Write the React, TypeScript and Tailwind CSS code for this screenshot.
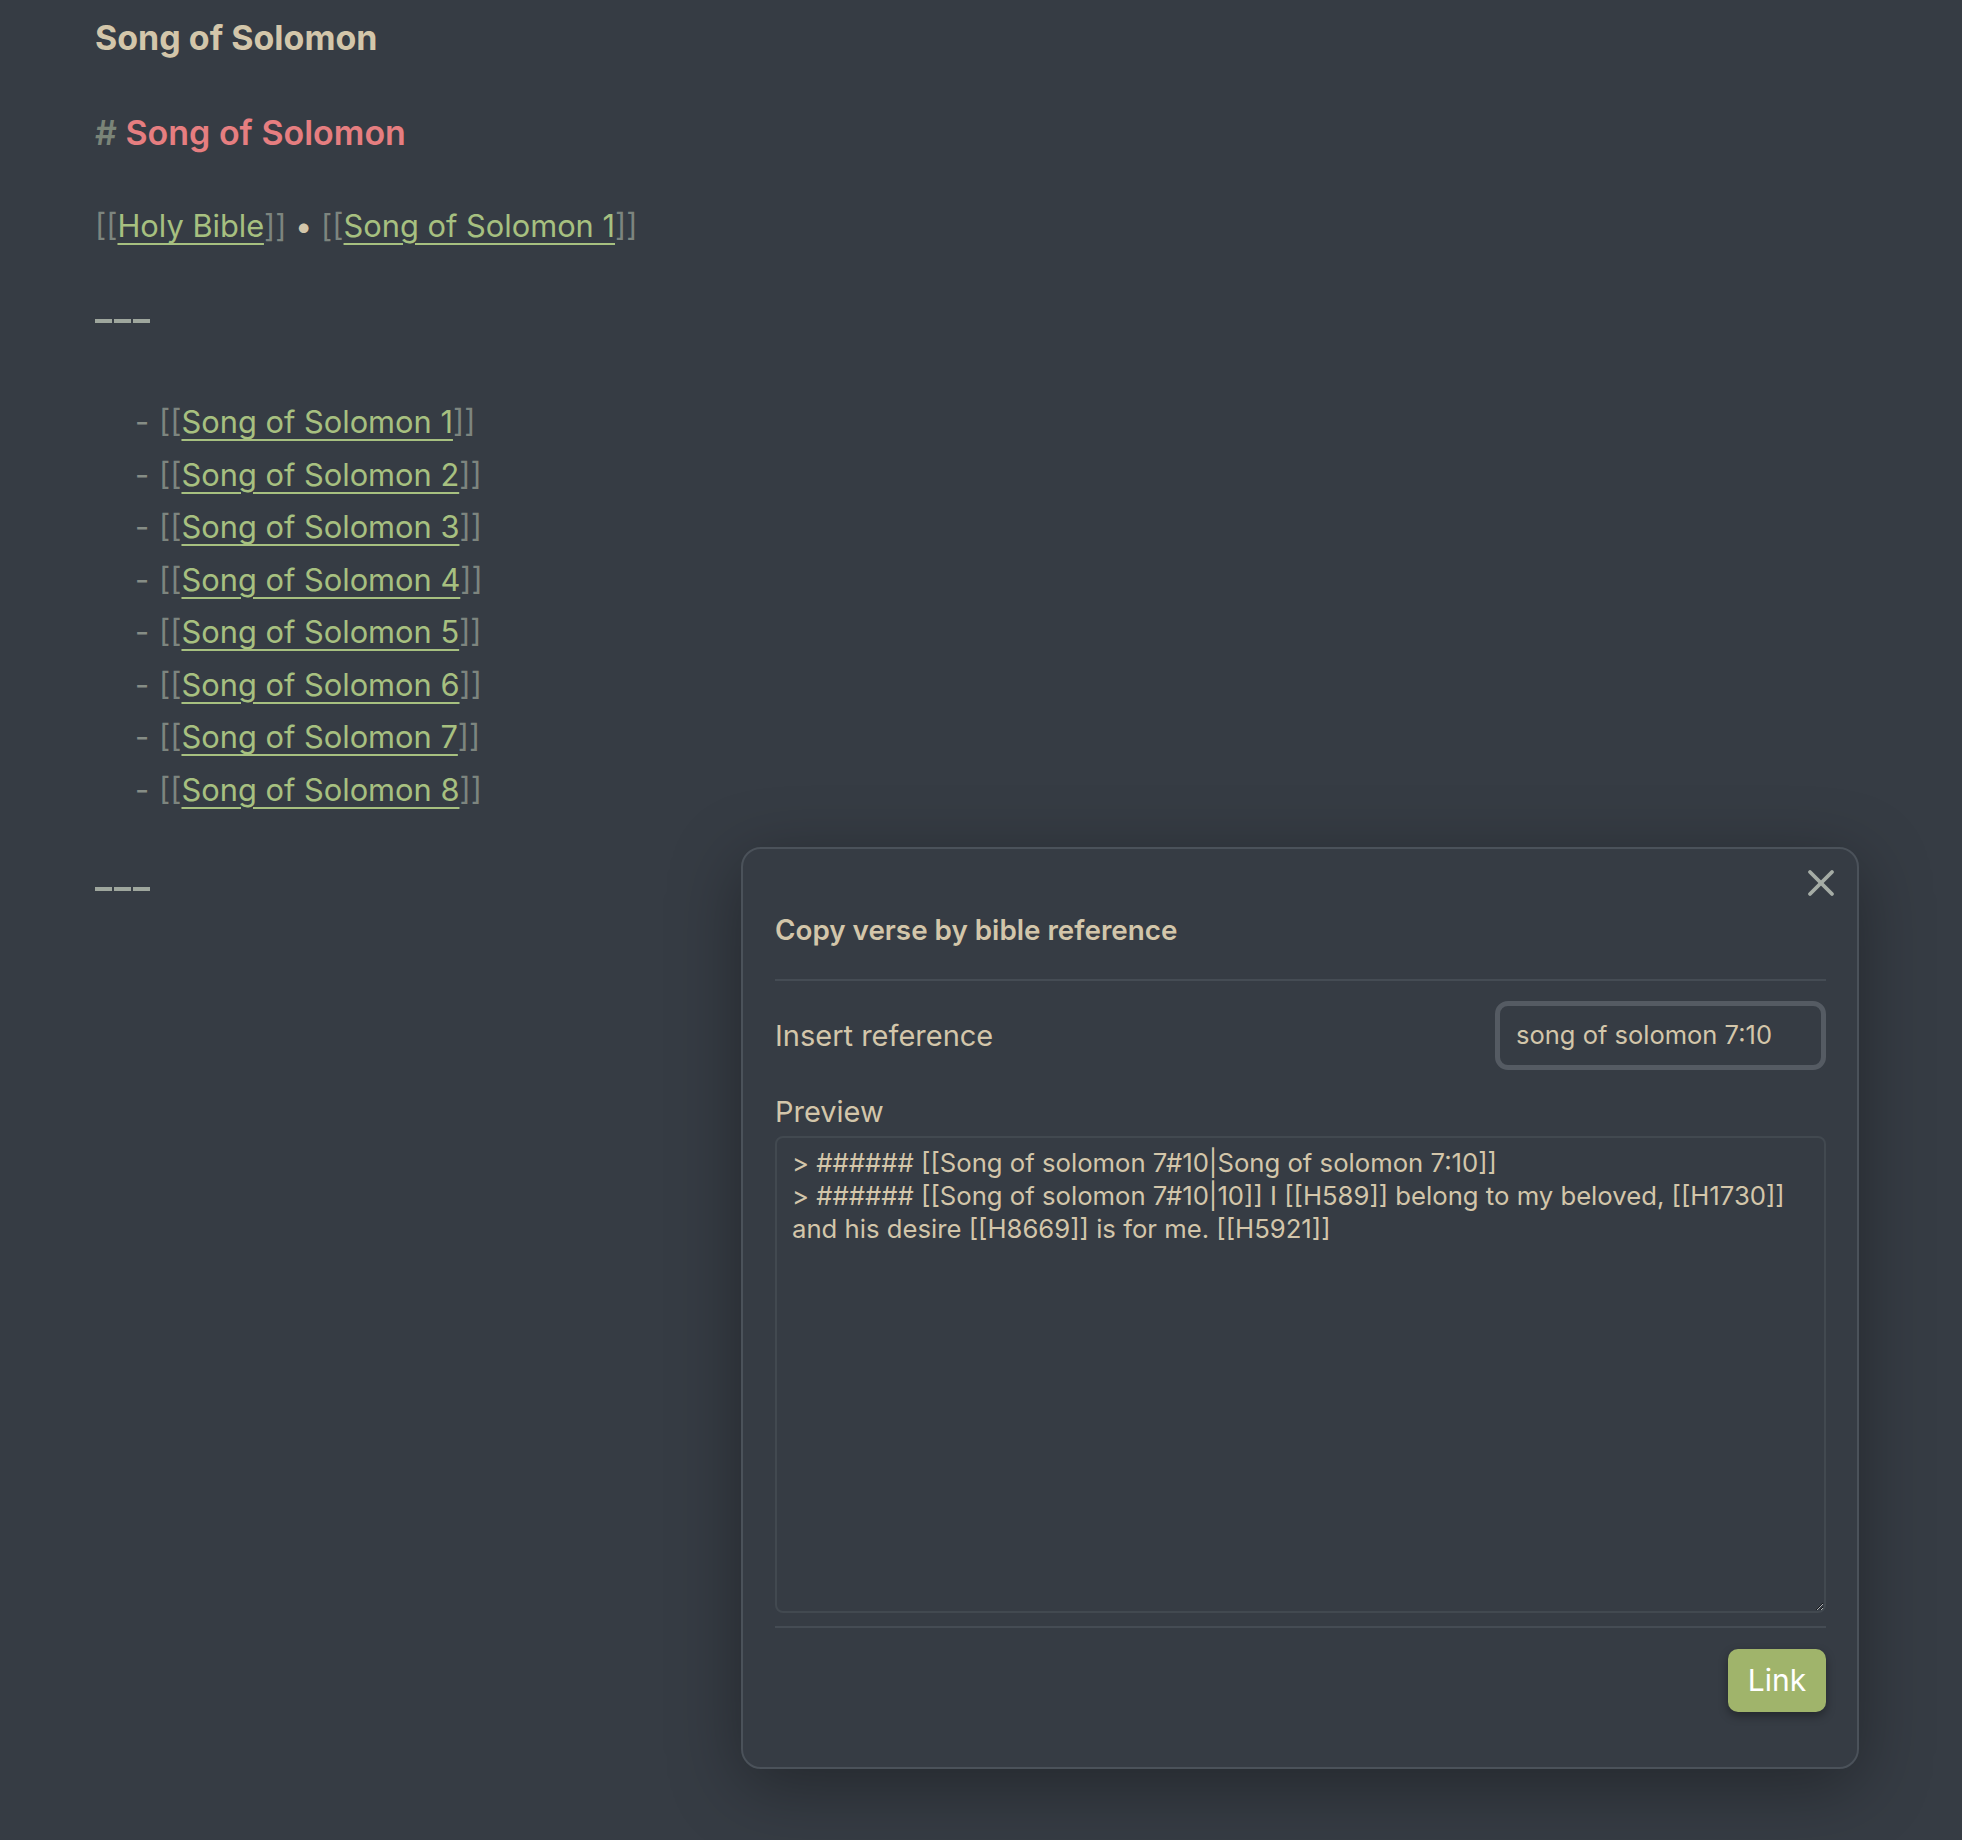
import { X } from "lucide-react";

const chapters = [1, 2, 3, 4, 5, 6, 7, 8];

const Rule = () => (
    <div className="flex h-[52px] items-center gap-[2px]" aria-label="---">
        <span className="h-[4px] w-[17px] bg-[#9ea69d]" />
        <span className="h-[4px] w-[17px] bg-[#9ea69d]" />
        <span className="h-[4px] w-[17px] bg-[#9ea69d]" />
    </div>
)

const WikiLink = ({ text }: { text: string }) => (
    <span>
        <span className="text-[#7d857f]">[[</span>
        <span className="text-[#a7c080] underline decoration-2 underline-offset-[6px]">{text}</span>
        <span className="text-[#7d857f]">]]</span>
    </span>
)

const preview = `> ###### [[Song of solomon 7#10|Song of solomon 7:10]]
> ###### [[Song of solomon 7#10|10]] I [[H589]] belong to my beloved, [[H1730]] and his desire [[H8669]] is for me. [[H5921]]`

const VerseModal = () => (
    <div className="absolute left-[741px] top-[847px] w-[1118px] h-[922px] rounded-[20px] border-2 border-[#4b525a] bg-[#363c44] pl-[32px] pr-[31px] pt-[61px] shadow-[0_16px_70px_rgba(0,0,0,0.35)]">
        <button className="absolute right-[14px] top-[12px] text-[#a5aca5]">
            <X size={44} strokeWidth={2.1} />
        </button>
        <h2 className="h-[40px] text-[27.8px] font-semibold leading-[40px] text-[#d3c6aa]">Copy verse by bible reference</h2>
        <div className="mt-[29px] h-[2px] bg-[#454c54]" />
        <div className="mt-[20px] flex h-[69px] items-center justify-between">
            <span className="text-[29px] text-[#d3c6aa]">Insert reference</span>
            <div className="flex h-[69px] w-[331px] items-center rounded-[13px] border-[5px] border-[#555b63] pl-[16px] text-[25.5px] text-[#d3c6aa]">
                song of solomon 7:10
            </div>
        </div>
        <div className="mt-[24px] h-[36px] text-[29px] leading-[36px] text-[#d3c6aa]">Preview</div>
        <textarea
            readOnly
            value={preview}
            className="mt-[6px] block h-[477px] w-full resize-y rounded-[8px] border-2 border-[#424950] bg-[#363c44] px-[15px] pt-[8px] text-[25.7px] leading-[33px] text-[#d3c6aa] outline-none"
            style={{ fontFamily: "Inter, sans-serif" }}
        />
        <div className="mt-[13px] h-[2px] bg-[#454c54]" />
        <div className="mt-[21px] flex justify-end">
            <button className="h-[63px] w-[98px] rounded-[10px] bg-[#a0b46b] text-[30px] text-white shadow-[0_4px_10px_rgba(0,0,0,0.35)]">
                Link
            </button>
        </div>
    </div>
)

const App = () => {
    return (
        <div className="relative h-[1840px] w-[1962px] overflow-hidden bg-[#363c44] font-['Inter',sans-serif]">
            <div className="pl-[95px] pt-[13px]">
                <div className="h-[50px] text-[34px] font-bold leading-[50px] text-[#d3c6aa]">Song of Solomon</div>
                <div className="mt-[45px] h-[50px] text-[34px] font-semibold leading-[50px]">
                    <span className="text-[#7a8478]"># </span>
                    <span className="text-[#e67e80]">Song of Solomon</span>
                </div>
                <div className="mt-[42px] h-[52px] text-[30.8px] leading-[52px]">
                    <WikiLink text="Holy Bible" />
                    <span className="text-[#d3c6aa]"> • </span>
                    <WikiLink text="Song of Solomon 1" />
                </div>
                <div className="mt-[43px]">
                    <Rule />
                </div>
                <ul className="mt-[49px]">
                    {chapters.map(n => (
                        <li key={n} className="flex h-[52.55px] items-center pl-[40px] text-[30.8px]">
                            <span className="w-[24px] text-[#868d86]">-</span>
                            <WikiLink text={`Song of Solomon ${n}`} />
                        </li>
                    ))}
                </ul>
                <div className="mt-[47px]">
                    <Rule />
                </div>
            </div>
            <VerseModal />
        </div>
    )
}

export default App
